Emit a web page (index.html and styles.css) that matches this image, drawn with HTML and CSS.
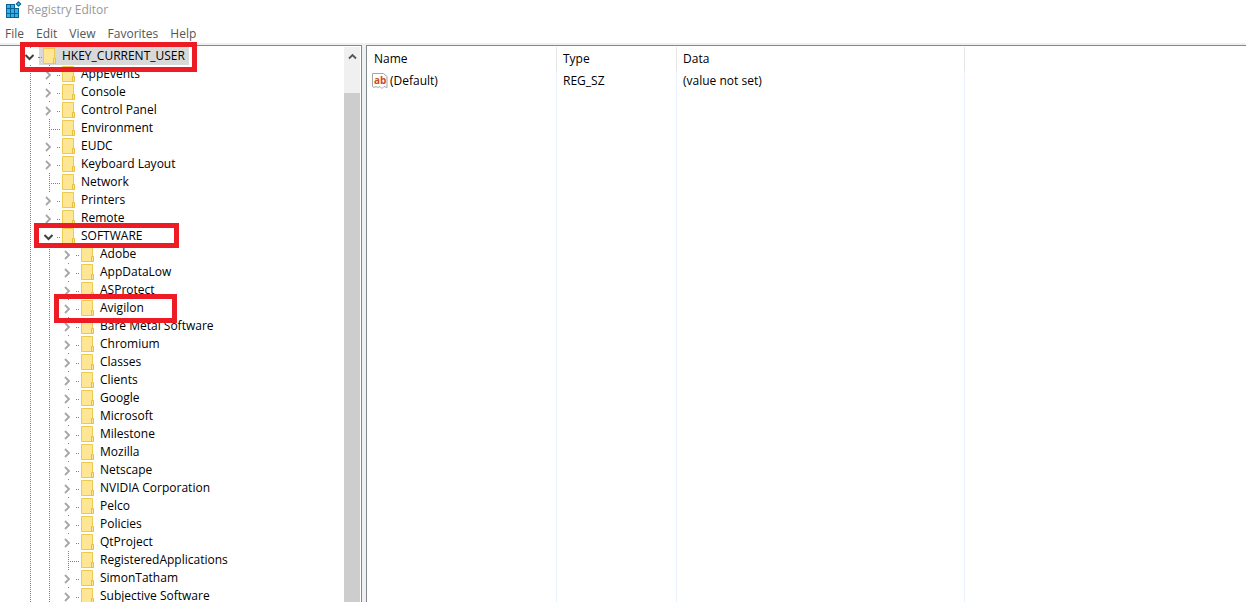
FILE: index.html
```
<!DOCTYPE html>
<html lang="en">
<head>
<meta charset="UTF-8">
<meta name="viewport" content="width=device-width, initial-scale=1.0">
<title>Registry Editor</title>
<link rel="stylesheet" href="styles.css">
</head>
<body>
<header class="titlebar">
  <svg class="app-icon" width="17" height="18" viewBox="0 0 17 18">
    <path fill="#0b6295" d="M1 4h9v4h4v10H1z"/>
    <path fill="#35b0e4" d="M2 5h3v3H2zM6 5h3v3H6zM2 9h3v4H2zM6 9h3v4H6zM10 9h3v4h-3zM2 14h3v3H2zM6 14h3v3H6zM10 14h3v3h-3z"/>
    <path fill="#0b6295" d="M13.500 1l3 3-3 3-3-3z"/>
    <path fill="#35b0e4" d="M13.500 2.500l1.500 1.500-1.500 1.500-1.500-1.500z"/>
  </svg>
  <h1>Registry Editor</h1>
</header>

<nav class="menubar">
  <button>File</button>
  <button>Edit</button>
  <button>View</button>
  <button>Favorites</button>
  <button>Help</button>
</nav>

<main class="panes">
  <section class="tree-pane">
    <ul class="tree" id="tree"></ul>
    <div class="scrollbar">
      <button class="scroll-up" aria-label="Scroll up">
        <svg width="9" height="7" viewBox="0 0 9 7"><path d="M1 5.500l3.500-3.500 3.500 3.500" fill="none" stroke="#555" stroke-width="1.800"/></svg>
      </button>
      <div class="scroll-thumb"></div>
    </div>
  </section>

  <section class="values-pane">
    <table class="values">
      <thead>
        <tr><th class="col-name">Name</th><th class="col-type">Type</th><th class="col-data">Data</th><th></th></tr>
      </thead>
      <tbody>
        <tr>
          <td class="value-name">
            <svg width="16" height="16" viewBox="0 0 16 16">
              <path d="M.5.5h11l3.500 3v11l-3-1-2 2-2-2-2 1-2-1-2 1-1.500-1z" fill="#fff" stroke="#a5a5a5"/>
              <text x="2" y="11" class="string-glyph">ab</text>
            </svg>
            (Default)
          </td>
          <td>REG_SZ</td>
          <td>(value not set)</td>
          <td></td>
        </tr>
        <tr class="filler"><td></td><td></td><td></td><td></td></tr>
      </tbody>
    </table>
  </section>
</main>

<script src="tree.js"></script>
</body>
</html>
```
FILE: styles.css
```
* {
  box-sizing: border-box;
}
body {
  margin: 0;
  height: 100vh;
  display: flex;
  flex-direction: column;
  overflow: hidden;
  background-color: white;
  color: black;
  font-family: "Segoe UI", "Open Sans", "Noto Sans", sans-serif;
  font-size: 12px;
  line-height: 18px;
}
button {
  padding: 0;
  border: none;
  background: none;
  font: inherit;
  color: inherit;
}
svg {
  display: block;
}

/* Title and menu */
.titlebar {
  display: flex;
  align-items: center;
  gap: 5px;
  height: 20px;
  padding-left: 5px;
}
.app-icon {
  margin-bottom: 2px;
}
.titlebar h1 {
  margin: 0;
  font-size: 12px;
  font-weight: normal;
  color: #999;
}
.menubar {
  display: flex;
  align-items: flex-end;
  gap: 12px;
  height: 23px;
  padding: 0 5px;
  color: #555;
}

/* Panes */
.panes {
  flex: 1;
  display: flex;
  min-height: 0;
  border-top: 2px solid #f0f0f0;
  background-color: #f0f0f0;
}
.tree-pane {
  width: 362px;
  display: flex;
  justify-content: space-between;
  padding: 1px 1px 0 20px;
  border-top: 1px solid #828790;
  border-right: 1px solid #828790;
  background-color: white;
}
.values-pane {
  flex: 1;
  margin-left: 4px;
  padding-top: 1px;
  border-top: 1px solid #828790;
  border-left: 1px solid #828790;
  background-color: white;
}

/* Tree */
.tree,
.tree ul {
  margin: 0;
  padding: 0;
  list-style: none;
}
.tree ul {
  padding-left: 19px;
}
.tree li {
  background: repeating-linear-gradient(#808080 0 1px, transparent 1px 2px) 10px 0 / 1px 100% no-repeat;
}
.row {
  position: relative;
  display: flex;
  width: max-content;
  height: 18px;
  background: repeating-linear-gradient(90deg, #808080 0 1px, transparent 1px 2px) 10px 10px / 12px 1px no-repeat;
}
.toggle {
  display: flex;
  align-items: flex-end;
  justify-content: center;
  width: 19px;
  height: 18px;
}
.toggle svg {
  background-color: white;
}
.key {
  display: flex;
  gap: 6px;
  padding: 0 4px;
  white-space: nowrap;
}
.selected .key {
  background: repeating-linear-gradient(90deg, #808080 0 1px, transparent 1px 2px) 0 10px / 3px 1px no-repeat #d9d9d9;
}
.key svg {
  margin-top: 1px;
}

/* Red callout frames */
.mark {
  position: absolute;
  z-index: 1;
  border: 5px solid #ed1c24;
}
.mark-root {
  top: -5px;
  left: 0;
  width: 177px;
  height: 30px;
}
.mark-software {
  top: -4px;
  left: -5px;
  width: 145px;
  height: 25px;
}
.mark-avigilon {
  top: -5px;
  left: -4px;
  width: 123px;
  height: 29px;
}

/* Scrollbar */
.scrollbar {
  display: flex;
  flex-direction: column;
  width: 16px;
  background-color: #f0f0f0;
}
.scroll-up {
  display: flex;
  align-items: center;
  justify-content: center;
  height: 18px;
}
.scroll-thumb {
  flex: 1;
  margin-top: 28px;
  background-color: #cdcdcd;
}

/* Values */
.values {
  width: 100%;
  height: 100%;
  table-layout: fixed;
  border-spacing: 0;
}
.values th,
.values td {
  padding: 0 6px;
  border-right: 1px solid #e8f1fc;
  text-align: left;
  font-weight: normal;
}
.values th {
  height: 24px;
  border-color: #e5e5e5;
}
.values th:first-child {
  padding-left: 7px;
}
.values th:last-child,
.values td:last-child {
  border-right: none;
}
.values td {
  height: 20px;
}
.values .filler td {
  height: auto;
}
.col-name {
  width: 190px;
}
.col-type {
  width: 120px;
}
.col-data {
  width: 288px;
}
.values .value-name {
  display: flex;
  align-items: center;
  gap: 2px;
  padding-left: 5px;
}
.string-glyph {
  font: bold 10px "Open Sans", sans-serif;
  fill: #d04a26;
}
```
FILE: tree.js
```
const registry = {
  name: 'HKEY_CURRENT_USER', selected: true, mark: 'root', children: [
    { name: 'AppEvents' },
    { name: 'Console' },
    { name: 'Control Panel' },
    { name: 'Environment', leaf: true },
    { name: 'EUDC' },
    { name: 'Keyboard Layout' },
    { name: 'Network', leaf: true },
    { name: 'Printers' },
    { name: 'Remote' },
    { name: 'SOFTWARE', mark: 'software', children: [
      { name: 'Adobe' },
      { name: 'AppDataLow' },
      { name: 'ASProtect' },
      { name: 'Avigilon', mark: 'avigilon' },
      { name: 'Bare Metal Software' },
      { name: 'Chromium' },
      { name: 'Classes' },
      { name: 'Clients' },
      { name: 'Google' },
      { name: 'Microsoft' },
      { name: 'Milestone' },
      { name: 'Mozilla' },
      { name: 'Netscape' },
      { name: 'NVIDIA Corporation' },
      { name: 'Pelco' },
      { name: 'Policies' },
      { name: 'QtProject' },
      { name: 'RegisteredApplications', leaf: true },
      { name: 'SimonTatham' },
      { name: 'Subjective Software' }
    ] }
  ]
};

const openArrow = '<svg width="15" height="16" viewBox="0 0 15 16"><path d="M3.500 6l4 4 4-4" fill="none" stroke="#404040" stroke-width="2"/></svg>';
const closedArrow = '<svg width="15" height="16" viewBox="0 0 15 16"><path d="M5 4l4 4-4 4" fill="none" stroke="#a6a6a6" stroke-width="1.800"/></svg>';
const folder = '<svg width="13" height="16" viewBox="0 0 13 16"><path d="M.5.5h11v15H.5z" fill="#ffe694" stroke="#ecc94f"/><path d="M10.500 10.500h2v5h-2z" fill="#ffe694" stroke="#e8bf3c"/></svg>';

function renderKey(key) {
  const toggle = key.leaf
    ? '<span class="toggle"></span>'
    : `<button class="toggle" aria-label="Toggle ${key.name}">${key.children ? openArrow : closedArrow}</button>`;
  const mark = key.mark ? `<span class="mark mark-${key.mark}"></span>` : '';
  const children = key.children ? `<ul>${key.children.map(renderKey).join('')}</ul>` : '';
  return `<li><div class="row${key.selected ? ' selected' : ''}">${toggle}<span class="key">${folder}${key.name}</span>${mark}</div>${children}</li>`;
}

document.getElementById('tree').innerHTML = renderKey(registry);
```
